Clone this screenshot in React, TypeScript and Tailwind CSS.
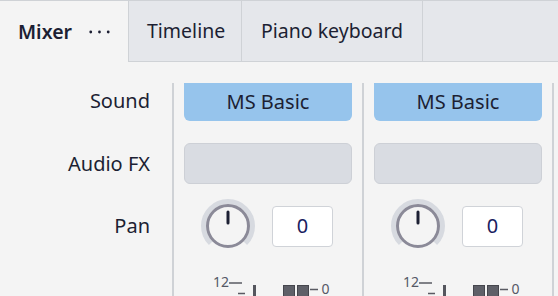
import { ReactNode } from "react"

function Tab({ children, active, className }: { children: ReactNode; active?: boolean; className: string }) {
  return (
    <div
      className={
        active
          ? `flex items-center whitespace-nowrap border-r border-[#cfd2d6] bg-[#f4f4f4] ${className}`
          : `flex items-center whitespace-nowrap border-r border-b border-[#cfd2d6] bg-[#e5e7eb] ${className}`
      }
    >
      {children}
    </div>
  )
}

function Knob() {
  return (
    <svg width="56" height="56" viewBox="0 0 56 56" className="shrink-0">
      <path d="M10.68 45.32 A24.5 24.5 0 1 1 45.32 45.32" fill="none" stroke="#d7dae0" strokeWidth="5" />
      <circle cx="28" cy="28" r="20.5" fill="none" stroke="#8b8a98" strokeWidth="3" />
      <line x1="28" y1="14" x2="28" y2="25" stroke="#1c1f33" strokeWidth="3" strokeLinecap="round" />
    </svg>
  )
}

function Meter() {
  return (
    <svg width="168" height="26" viewBox="0 0 168 26" className="block">
      <text x="29" y="17" fontSize="14" fill="#555866" fontFamily="Noto Sans, sans-serif">12</text>
      <line x1="45" y1="13" x2="58" y2="13" stroke="#5a5b63" strokeWidth="1.5" />
      <line x1="54" y1="23.5" x2="61" y2="23.5" stroke="#5a5b63" strokeWidth="1.5" />
      <rect x="69" y="15" width="3" height="20" fill="#55565e" />
      <rect x="99.5" y="15.5" width="11" height="20" fill="#5f6068" stroke="#45464d" />
      <rect x="113.5" y="15.5" width="11" height="20" fill="#5f6068" stroke="#45464d" />
      <line x1="126" y1="19.5" x2="134" y2="19.5" stroke="#5a5b63" strokeWidth="1.5" />
      <text x="137.5" y="24" fontSize="14" fill="#555866" fontFamily="Noto Sans, sans-serif">0</text>
    </svg>
  )
}

function Channel() {
  return (
    <div className="w-[190px] shrink-0 border-l-2 border-[#cfd2d6] px-[10px]">
      <div className="flex h-[38px] items-center justify-center rounded-b-[6px] bg-[#96c4ec]">MS Basic</div>
      <div className="mt-[22px] h-[41px] rounded-[6px] border border-[#cdd0d6] bg-[#d9dce2]" />
      <div className="mt-[12px] flex h-[60px] items-center gap-[16px] pl-[16px]">
        <Knob />
        <div className="flex h-[41px] w-[61px] items-center justify-center rounded-[4px] border border-[#d0d3d8] bg-white text-[#1a2060]">
          0
        </div>
      </div>
      <div className="mt-[14px]">
        <Meter />
      </div>
    </div>
  )
}

export default function App() {
  return (
    <div className="h-[296px] w-[558px] overflow-hidden bg-[#f4f4f4] font-['Noto_Sans',sans-serif] text-[20px] text-[#1c1f33]">
      <div className="flex h-[62px] border-t border-[#cfd2d6] text-[19.5px]">
        <Tab active className="w-[129px] gap-[17px] px-[18px]">
          <span className="font-semibold">Mixer</span>
          <svg width="24" height="6" viewBox="0 0 24 6">
            <circle cx="2" cy="3" r="1.6" fill="#1c1f33" />
            <circle cx="12" cy="3" r="1.6" fill="#1c1f33" />
            <circle cx="22" cy="3" r="1.6" fill="#1c1f33" />
          </svg>
        </Tab>
        <Tab className="w-[113px] px-[18px]">Timeline</Tab>
        <Tab className="w-[181px] px-[19px]">Piano keyboard</Tab>
        <div className="flex-1 border-b border-[#cfd2d6] bg-[#e5e7eb]" />
      </div>
      <div className="flex h-[234px] pt-[21px]">
        <div className="w-[172px] shrink-0 pr-[22px] text-right">
          <div className="flex h-[38px] items-center justify-end pb-[3px]">Sound</div>
          <div className="mt-[22px] flex h-[41px] items-center justify-end">Audio FX</div>
          <div className="mt-[12px] flex h-[60px] items-center justify-end">Pan</div>
        </div>
        <Channel />
        <Channel />
        <div className="w-[6px] shrink-0 border-l-2 border-[#cfd2d6]" />
      </div>
    </div>
  )
}
